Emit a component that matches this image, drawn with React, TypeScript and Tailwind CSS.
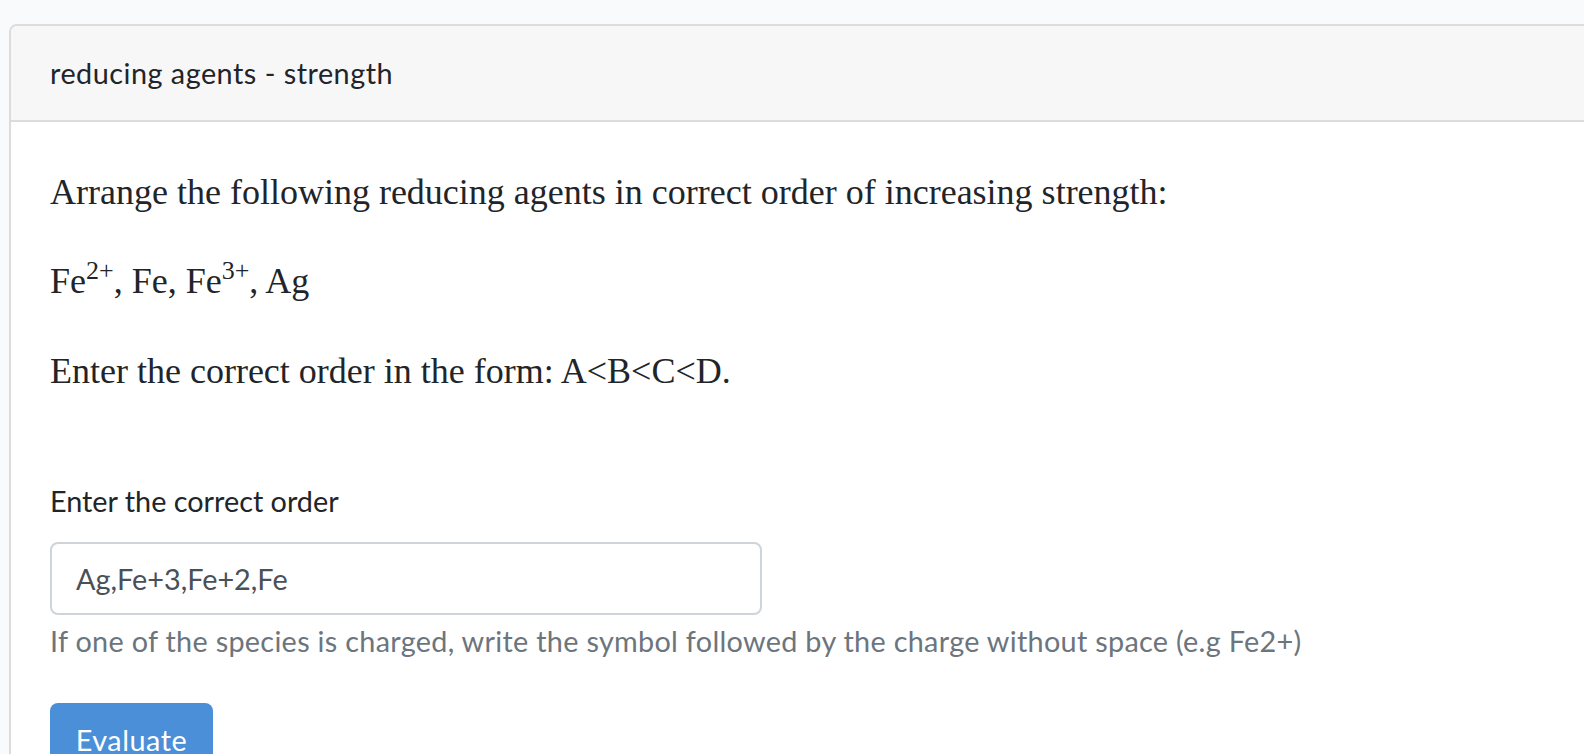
export default function App() {
  const sans = "font-['Lato','Open_Sans',sans-serif]";
  return (
    <div className="min-h-[754px] w-full overflow-hidden bg-[#f8fafc] pt-[24px] pl-[9px]">
      <div className={`w-[1640px] rounded-[8px] border-2 border-[#dcdcdc] bg-white text-[#212529] ${sans}`}>
        <div className="rounded-t-[6px] border-b-2 border-[#dcdcdc] bg-[#f7f7f7] px-[39px] py-[24px] text-[28.8px] leading-[46px] tracking-[0.5px]">
          reducing agents - strength
        </div>
        <div className="p-[39px] pt-[40px]">
          <div className="font-['Liberation_Serif','Times_New_Roman',serif] text-[36px] leading-[61.4px]">
            <p className="mb-[28px]">Arrange the following reducing agents in correct order of increasing strength:</p>
            <p className="mb-[28px]">
              Fe<sup className="relative top-[-14px] align-baseline text-[26px]">2+</sup>, Fe, Fe
              <sup className="relative top-[-14px] align-baseline text-[26px]">3+</sup>, Ag
            </p>
            <p>Enter the correct order in the form: A&lt;B&lt;C&lt;D.</p>
          </div>
          <label className="mt-[76px] mb-[18px] block text-[28.8px] leading-[46px]">Enter the correct order</label>
          <input
            readOnly
            value="Ag,Fe+3,Fe+2,Fe"
            className="block h-[73px] w-[712px] rounded-[8px] border-2 border-[#ced4da] bg-white px-[24px] text-[28.8px] text-[#495057] outline-none"
          />
          <div className="mt-[6px] text-[28.8px] leading-[40px] tracking-[0.3px] text-[#6c757d]">
            If one of the species is charged, write the symbol followed by the charge without space (e.g Fe2+)
          </div>
          <button className="mt-[42px] h-[74px] w-[163px] rounded-[8px] bg-[#4b8fd8] text-center text-[28.8px] leading-[46px] tracking-[0.5px] text-white">
            Evaluate
          </button>
        </div>
      </div>
    </div>
  );
}
